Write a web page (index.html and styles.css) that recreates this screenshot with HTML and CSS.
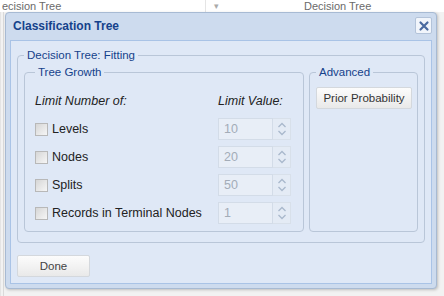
FILE: index.html
```html
<!DOCTYPE html>
<html>
<head>
<meta charset="utf-8">
<link rel="stylesheet" href="styles.css">
</head>
<body>
<div class="app">
  <div class="app-row">
    <span class="app-cell app-cell-left">ecision Tree</span>
    <span class="app-arrow">&#9662;</span>
    <span class="app-cell app-cell-right">Decision Tree</span>
  </div>
</div>
<div class="window">
  <div class="win-header">
    <span class="win-title">Classification Tree</span>
    <span class="win-close">
      <svg width="12" height="12" viewBox="0 0 12 12"><path d="M2.5 2.5 L9.5 9.5 M9.5 2.5 L2.5 9.5" stroke="#4a6aa0" stroke-width="2.2" stroke-linecap="round"/></svg>
    </span>
  </div>
  <div class="win-body">
    <fieldset class="fs fs-outer">
      <legend>Decision Tree: Fitting</legend>
      <div class="fs-row">
        <fieldset class="fs fs-growth">
          <legend>Tree Growth</legend>
          <div class="grid">
            <div class="hdr">Limit Number of:</div>
            <div class="hdr">Limit Value:</div>
            <label class="chk"><span class="box"></span>Levels</label>
            <div class="spin"><span class="val">10</span><span class="arrows"><svg width="10" height="16" viewBox="0 0 10 16"><path d="M1.5 6 L5 2.5 L8.5 6 M1.5 10 L5 13.5 L8.5 10" fill="none" stroke="#a9b8cc" stroke-width="1.3"/></svg></span></div>
            <label class="chk"><span class="box"></span>Nodes</label>
            <div class="spin"><span class="val">20</span><span class="arrows"><svg width="10" height="16" viewBox="0 0 10 16"><path d="M1.5 6 L5 2.5 L8.5 6 M1.5 10 L5 13.5 L8.5 10" fill="none" stroke="#a9b8cc" stroke-width="1.3"/></svg></span></div>
            <label class="chk"><span class="box"></span>Splits</label>
            <div class="spin"><span class="val">50</span><span class="arrows"><svg width="10" height="16" viewBox="0 0 10 16"><path d="M1.5 6 L5 2.5 L8.5 6 M1.5 10 L5 13.5 L8.5 10" fill="none" stroke="#a9b8cc" stroke-width="1.3"/></svg></span></div>
            <label class="chk"><span class="box"></span>Records in Terminal Nodes</label>
            <div class="spin"><span class="val">1</span><span class="arrows"><svg width="10" height="16" viewBox="0 0 10 16"><path d="M1.5 6 L5 2.5 L8.5 6 M1.5 10 L5 13.5 L8.5 10" fill="none" stroke="#a9b8cc" stroke-width="1.3"/></svg></span></div>
          </div>
        </fieldset>
        <fieldset class="fs fs-adv">
          <legend>Advanced</legend>
          <button class="btn btn-prior">Prior Probability</button>
        </fieldset>
      </div>
    </fieldset>
    <div class="footer">
      <button class="btn btn-done">Done</button>
    </div>
  </div>
</div>
</body>
</html>
```

FILE: styles.css
```css
html, body {
  margin: 0;
  padding: 0;
  width: 444px;
  height: 296px;
  overflow: hidden;
  background: #eeeeee;
  font-family: "Liberation Sans", Arial, sans-serif;
  font-size: 12px;
  color: #222;
}
.app {
  height: 296px;
  background: linear-gradient(90deg, #e4e4e4 0, #e4e4e4 1px, #f2f2f2 1px, #f2f2f2 3px, #dadada 3px, #dadada 4px, #f2f2f2 4px);
}
.app-row {
  display: flex;
  align-items: center;
  height: 12px;
  background: #ffffff;
  overflow: hidden;
  color: #6a6a6a;
  font-size: 11px;
  line-height: 12px;
}
.app-cell-left {
  margin-left: 2px;
  width: 203px;
}
.app-arrow {
  width: 20px;
  color: #aaa;
  font-size: 9px;
  border-left: 1px solid #e5e5e5;
  text-align: center;
}
.app-cell-right {
  margin-left: 78px;
}
.window {
  position: absolute;
  left: 5px;
  top: 12px;
  width: 422px;
  height: 271px;
  padding: 0 4px 4px 4px;
  background: #cddbee;
  border: 1px solid #a7bad3;
  border-radius: 4px;
  box-shadow: 1px 1px 3px rgba(0,0,0,0.22);
  display: flex;
  flex-direction: column;
}
.win-header {
  height: 27px;
  display: flex;
  align-items: center;
  justify-content: space-between;
  padding: 0 0 2px 3px;
  box-sizing: border-box;
}
.win-title {
  font-weight: bold;
  color: #15428b;
  font-size: 12px;
}
.win-close {
  width: 15px;
  height: 15px;
  display: flex;
  align-items: center;
  justify-content: center;
  background: #f1f5fb;
  border: 1px solid #b3c3d9;
  border-radius: 2px;
}
.win-body {
  height: 244px;
  box-sizing: border-box;
  background: #dfe8f6;
  border: 1px solid #a9c3e6;
  padding: 7px 6px 0 6px;
  display: flex;
  flex-direction: column;
}
.fs {
  margin: 0;
  border: 1px solid #b9c6d8;
  border-radius: 4px;
  box-sizing: border-box;
}
.fs legend {
  color: #15428b;
  padding: 0 3px;
  font-size: 11.5px;
  line-height: 14px;
}
.fs-outer {
  width: 408px;
  height: 195px;
  padding: 3px 6px 0 6px;
}
.fs-row {
  display: flex;
  gap: 5px;
}
.fs-growth {
  width: 280px;
  height: 167px;
  padding: 8px 10px 0 10px;
}
.fs-adv {
  flex: 1;
  height: 167px;
  padding: 8px 5px 0 5px;
}
.fs-adv > legend {
  margin-left: 1px;
}
.grid {
  display: grid;
  grid-template-columns: 183px 73px;
  grid-auto-rows: 28px;
  align-items: center;
}
.hdr {
  font-style: italic;
  font-size: 12.5px;
  color: #222;
}
.chk {
  display: flex;
  align-items: center;
  font-size: 12.5px;
  color: #222;
}
.box {
  width: 11px;
  height: 11px;
  border: 1px solid #b8b8b8;
  background: linear-gradient(135deg, #d6d6d6, #f6f6f6);
  margin-right: 4px;
}
.spin {
  display: flex;
  height: 22px;
  box-sizing: border-box;
}
.val {
  flex: 1;
  padding-left: 5px;
  line-height: 20px;
  color: #a3acb8;
  font-size: 12.5px;
  border: 1px solid #d3dce8;
  background: #e8eef7;
}
.arrows {
  width: 17px;
  display: flex;
  align-items: center;
  justify-content: center;
  background: #e4ebf5;
  border: 1px solid #d8e0ea;
  border-left: none;
}
.btn {
  font-family: "Liberation Sans", Arial, sans-serif;
  font-size: 11.5px;
  color: #333;
  border: 1px solid #d4d8dd;
  border-radius: 2px;
  background: linear-gradient(#fcfcfc, #e9e9e9);
  padding: 0;
  height: 22px;
}
.btn-prior {
  width: 96px;
  margin-left: 1px;
}
.footer {
  margin-top: 12px;
}
.btn-done {
  width: 73px;
  color: #444;
}
```
